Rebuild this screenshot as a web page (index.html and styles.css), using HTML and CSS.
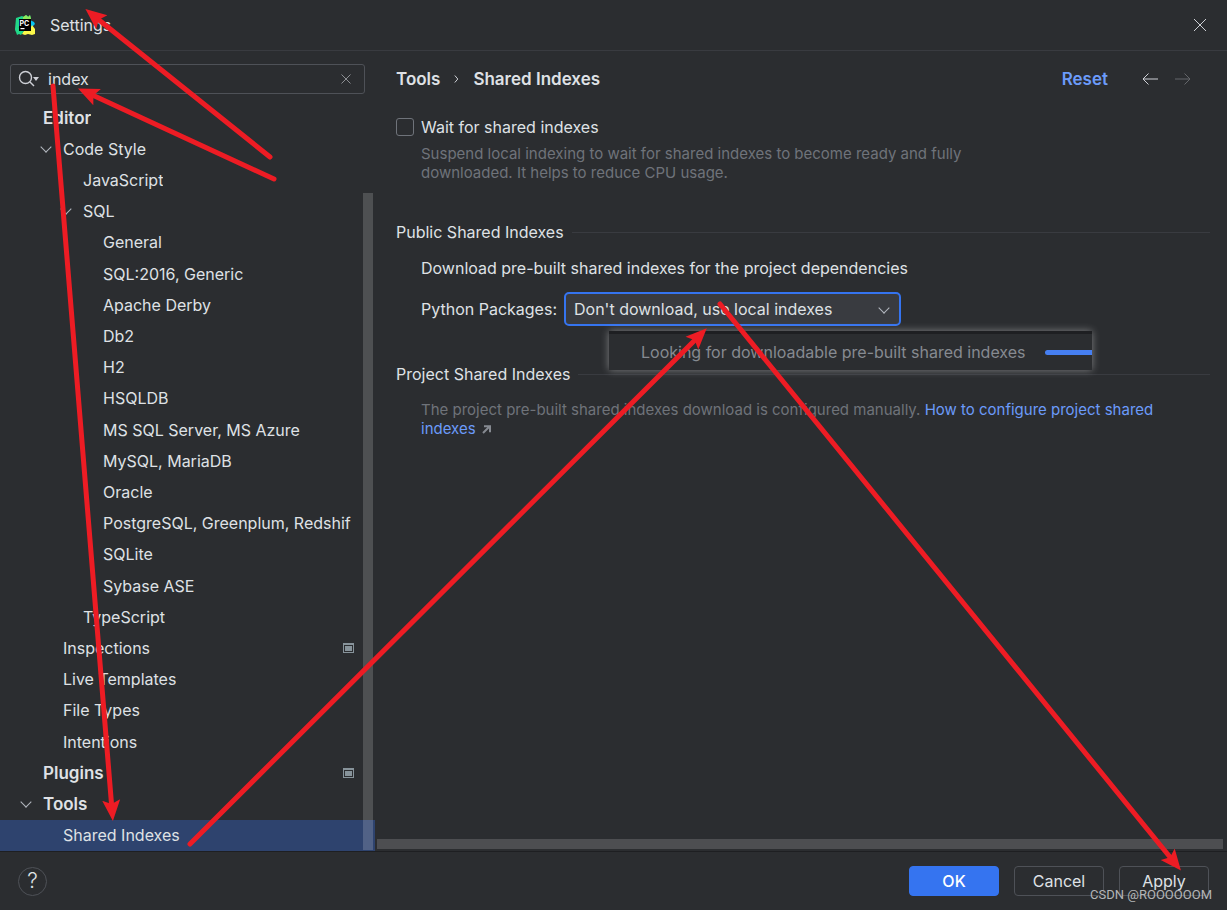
FILE: index.html
```
<!DOCTYPE html>
<html lang="en">
<head>
  <meta charset="utf-8">
  <title>Settings</title>
  <link rel="stylesheet" href="styles.css">
</head>
<body>
<header class="titlebar">
  <svg class="logo" width="20" height="20" viewBox="0 0 20 20">
    <path fill="#21d789" d="M1 3l6-2 2 1 2-2 3 2 1-2 1 4v8H4L1 17l-1-3z"/>
    <path fill="#8ee85a" d="M8 2l3-2 2 2 2-2 1 4H8z"/>
    <path fill="#07c3f2" d="M15 5l4 2 1 2-3 3h-2z"/>
    <path fill="#fcf84a" d="M9 15l6-1 2-4 3 4v5l-3 1-4-1-3 1-3-1z"/>
    <path fill="#21d789" d="M0 14l4-2 5 4-3 4-2-1-2 1z"/>
    <rect x="4" y="4" width="12" height="12"/>
    <text x="4.500" y="10.500">PC</text>
    <path fill="#fff" d="M5.500 13h4v1.200h-4z"/>
  </svg>
  <h1>Settings</h1>
  <button class="icon-button close" aria-label="Close">
    <svg width="14" height="14" viewBox="0 0 14 14"><path d="M1 1l12 12M13 1L1 13"/></svg>
  </button>
</header>

<main>
  <nav class="sidebar">
    <div class="search">
      <svg class="lens" width="22" height="18" viewBox="0 0 22 18">
        <circle cx="7.500" cy="7.500" r="6"/>
        <path d="M12 12l4 4"/>
        <path class="fill" d="M15 7h6l-3 4z"/>
      </svg>
      <input type="text" value="index" aria-label="Search settings">
      <button class="icon-button" aria-label="Clear">
        <svg width="10" height="10" viewBox="0 0 10 10"><path d="M0.500 0.500l9 9M9.500 0.500l-9 9"/></svg>
      </button>
    </div>
    <ul class="tree">
      <li class="group"><i></i><span>Editor</span></li>
      <li class="level-1"><i class="open"></i><span>Code Style</span></li>
      <li class="level-2"><i></i><span>JavaScript</span></li>
      <li class="level-2"><i class="open"></i><span>SQL</span></li>
      <li class="level-3"><i></i><span>General</span></li>
      <li class="level-3"><i></i><span>SQL:2016, Generic</span></li>
      <li class="level-3"><i></i><span>Apache Derby</span></li>
      <li class="level-3"><i></i><span>Db2</span></li>
      <li class="level-3"><i></i><span>H2</span></li>
      <li class="level-3"><i></i><span>HSQLDB</span></li>
      <li class="level-3"><i></i><span>MS SQL Server, MS Azure</span></li>
      <li class="level-3"><i></i><span>MySQL, MariaDB</span></li>
      <li class="level-3"><i></i><span>Oracle</span></li>
      <li class="level-3"><i></i><span>PostgreSQL, Greenplum, Redshif</span></li>
      <li class="level-3"><i></i><span>SQLite</span></li>
      <li class="level-3"><i></i><span>Sybase ASE</span></li>
      <li class="level-2"><i></i><span>TypeScript</span></li>
      <li class="level-1"><i></i><span>Inspections</span><b class="project"></b></li>
      <li class="level-1"><i></i><span>Live Templates</span></li>
      <li class="level-1"><i></i><span>File Types</span></li>
      <li class="level-1"><i></i><span>Intentions</span></li>
      <li class="group"><i></i><span>Plugins</span><b class="project"></b></li>
      <li class="group"><i class="open"></i><span>Tools</span></li>
      <li class="level-1 selected"><i></i><span>Shared Indexes</span></li>
    </ul>
    <div class="scroll-y"></div>
  </nav>

  <section class="content">
    <div class="page">
      <div class="heading">
        <h2>Tools</h2>
        <svg width="5" height="8" viewBox="0 0 5 8"><path d="M0.800 0.500L3.800 4l-3 3.500"/></svg>
        <h2>Shared Indexes</h2>
        <a class="reset" href="#">Reset</a>
        <button class="icon-button" aria-label="Back">
          <svg width="16" height="12" viewBox="0 0 16 12"><path d="M16 6H1M6.500 0.500L1 6l5.500 5.500"/></svg>
        </button>
        <button class="icon-button" aria-label="Forward" disabled>
          <svg width="16" height="12" viewBox="0 0 16 12"><path d="M0 6h15M9.500 0.500L15 6l-5.500 5.500"/></svg>
        </button>
      </div>

      <div class="option">
        <input type="checkbox" id="wait">
        <label for="wait">Wait for shared indexes</label>
      </div>
      <p class="hint">Suspend local indexing to wait for shared indexes to become ready and fully<br>downloaded. It helps to reduce CPU usage.</p>

      <h3>Public Shared Indexes</h3>
      <p class="text">Download pre-built shared indexes for the project dependencies</p>
      <div class="field">
        <label for="packages">Python Packages:</label>
        <div class="select">
          <select id="packages">
            <option>Don't download, use local indexes</option>
          </select>
          <i class="open"></i>
          <div class="popup">
            <span>Looking for downloadable pre-built shared indexes</span>
            <div class="progress"></div>
          </div>
        </div>
      </div>

      <h3>Project Shared Indexes</h3>
      <p class="hint">The project pre-built shared indexes download is configured manually. <a href="#">How to configure project shared<br>indexes</a>
        <svg width="9" height="9" viewBox="0 0 9 9"><path d="M1 8l6-6M2 1.200h6v6"/></svg></p>
    </div>
    <div class="scroll-x"></div>
  </section>
</main>

<footer>
  <button class="help" aria-label="Help">?</button>
  <button class="primary">OK</button>
  <button>Cancel</button>
  <button>Apply</button>
  <span class="watermark">CSDN @ROOOOOOM</span>
</footer>

<svg class="arrows" width="1227" height="910" viewBox="0 0 1227 910">
  <defs>
    <marker id="head" markerUnits="userSpaceOnUse" markerWidth="24" markerHeight="22" refX="10" refY="10" orient="auto">
      <path d="M21 10L0 1l4 9-4 9z"/>
    </marker>
  </defs>
  <path d="M270 157L94 16"/>
  <path d="M274 179L88 93"/>
  <path d="M53 86L112 810"/>
  <path d="M190 844L699 336"/>
  <path d="M720 304L1174 862"/>
</svg>
</body>
</html>
```
FILE: styles.css
```
* {
  box-sizing: border-box;
}
body {
  position: relative;
  display: flex;
  flex-direction: column;
  min-height: 100vh;
  margin: 0;
  background: #2b2d30;
  color: #dfe1e5;
  font: 16px/20px Inter, sans-serif;
}
h1, h2, h3, p, ul {
  margin: 0;
  padding: 0;
}
h1, h3 {
  font-size: 16px;
  font-weight: 400;
}
h2 {
  font-size: 17px;
  font-weight: 600;
}
a {
  color: #6b9bfa;
  text-decoration: none;
}
button, input, select {
  font: inherit;
  color: inherit;
}
svg {
  flex: none;
  fill: none;
  stroke: #ced0d6;
}
.logo {
  stroke: none;
}
.logo rect {
  fill: #000;
}
.logo text {
  fill: #fff;
  font-size: 7px;
  font-weight: 700;
}

.titlebar {
  display: flex;
  align-items: center;
  gap: 15px;
  height: 51px;
  padding: 0 20px 0 15px;
  border-bottom: 1px solid #393b40;
}
.icon-button {
  display: flex;
  padding: 0;
  border: 0;
  background: none;
}
.icon-button:disabled {
  opacity: 0.35;
}
.close {
  margin-left: auto;
}

main {
  display: flex;
  flex: 1;
}
.sidebar {
  position: relative;
  display: flex;
  flex-direction: column;
  width: 375px;
}
.search {
  display: flex;
  align-items: center;
  gap: 8px;
  height: 30px;
  margin: 13px 10px 8px;
  padding: 0 13px 0 7px;
  border: 1px solid #4e5157;
  border-radius: 3px;
}
.search input {
  flex: 1;
  min-width: 0;
  padding: 0;
  border: 0;
  outline: 0;
  background: none;
}
.search .icon-button {
  opacity: 0.6;
}
.lens {
  stroke-width: 1.4;
}
.lens .fill {
  fill: #ced0d6;
  stroke: none;
}

.tree {
  display: flex;
  flex: 1;
  flex-direction: column;
  list-style: none;
}
.tree li {
  display: flex;
  flex: 1 0 31px;
  align-items: center;
  gap: 9px;
  padding: 0 21px 0 18px;
  white-space: nowrap;
}
.tree span {
  overflow: hidden;
}
.tree .group {
  font-size: 17px;
  font-weight: 600;
}
.tree .level-1 {
  padding-left: 38px;
}
.tree .level-2 {
  padding-left: 58px;
}
.tree .level-3 {
  padding-left: 78px;
}
.tree .selected {
  background: #2e436e;
}
i {
  flex: none;
  width: 16px;
  height: 16px;
}
.open::before {
  content: "";
  display: block;
  width: 7px;
  height: 7px;
  margin: 2px 4px;
  border: solid #b4b8bf;
  border-width: 0 1px 1px 0;
  transform: rotate(45deg);
}
.project {
  width: 11px;
  height: 10px;
  margin-left: auto;
  padding: 1px;
  border: 1px solid #87939a;
  border-top-width: 2px;
  background: #87939a content-box;
}
.scroll-y {
  position: absolute;
  top: 142px;
  right: 2px;
  bottom: 1px;
  width: 10px;
  background: rgba(255, 255, 255, 0.17);
}

.content {
  display: flex;
  flex: 1;
  flex-direction: column;
  justify-content: space-between;
  padding: 0 4px 2px 2px;
}
.scroll-x {
  height: 10px;
  background: #4d4e51;
}
.page {
  padding: 18px 13px 0 19px;
}
.heading {
  display: flex;
  align-items: center;
  gap: 14px;
  margin-bottom: 28px;
  padding-right: 19px;
}
.reset {
  margin: 0 20px 0 auto;
  font-size: 17px;
  font-weight: 600;
}
.heading .icon-button + .icon-button {
  margin-left: 3px;
}
.option {
  display: flex;
  align-items: center;
  gap: 7px;
}
.option input {
  appearance: none;
  width: 18px;
  height: 18px;
  margin: 0;
  border: 1px solid #6f737a;
  border-radius: 3px;
}
.hint {
  margin: 7px 0 0 25px;
  color: #6f737a;
  font-size: 15px;
  line-height: 19px;
}
.hint svg {
  margin-left: 2px;
  stroke: #868a91;
  stroke-width: 2;
}
h3 {
  display: flex;
  align-items: center;
  gap: 8px;
  margin-top: 40px;
}
h3::after {
  content: "";
  flex: 1;
  height: 1px;
  background: #393b40;
}
.text {
  margin: 16px 0 0 25px;
}
.field {
  display: flex;
  align-items: center;
  gap: 7px;
  margin: 14px 0 0 25px;
}
.field + h3 {
  margin-top: 38px;
}
h3 + .hint {
  margin-top: 16px;
}
.select {
  position: relative;
  width: 337px;
}
.select select {
  appearance: none;
  display: block;
  width: 100%;
  height: 34px;
  padding: 0 8px;
  border: 2px solid #3574f0;
  border-radius: 5px;
  background: #393b40;
}
.select .open {
  position: absolute;
  top: 10px;
  right: 9px;
}
.popup {
  position: absolute;
  top: 39px;
  left: 45px;
  display: flex;
  align-items: center;
  justify-content: space-between;
  width: 483px;
  height: 39px;
  padding-left: 32px;
  border-top: 3px solid #1e1f22;
  background: #2b2d30;
  box-shadow: 0 0 8px rgba(255, 255, 255, 0.4);
  color: #868a91;
  white-space: nowrap;
}
.progress {
  width: 47px;
  height: 5px;
  border-radius: 3px 0 0 3px;
  background: #467ff2;
}

footer {
  position: relative;
  display: flex;
  align-items: center;
  gap: 15px;
  height: 59px;
  padding: 0 18px;
  border-top: 1px solid #1e1f22;
}
footer button {
  width: 90px;
  height: 30px;
  padding: 0;
  border: 1px solid #4e5157;
  border-radius: 4px;
  background: none;
}
footer .primary {
  border-color: #3574f0;
  background: #3574f0;
  color: #fff;
  font-weight: 500;
}
footer .help {
  width: 29px;
  height: 29px;
  margin-right: auto;
  border-radius: 50%;
  font-size: 21px;
  font-weight: 300;
}
.watermark {
  position: absolute;
  right: 15px;
  bottom: 6px;
  color: #b4b5b7;
  font: 13px/18px Roboto, sans-serif;
}

.arrows {
  position: absolute;
  top: 0;
  left: 0;
  stroke: none;
  pointer-events: none;
}
.arrows > path {
  stroke: #ed1c24;
  stroke-width: 5;
  stroke-linecap: round;
  marker-end: url(#head);
}
.arrows marker path {
  fill: #ed1c24;
}
```
